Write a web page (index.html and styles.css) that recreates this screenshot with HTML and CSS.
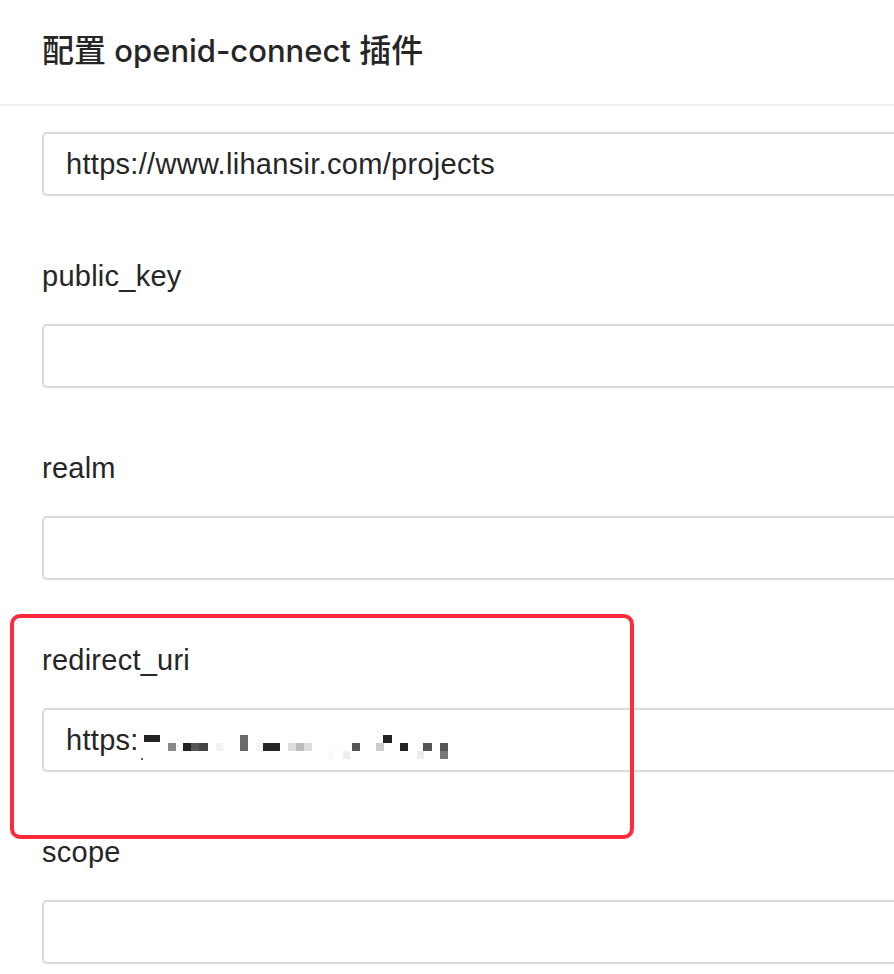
FILE: index.html
```html
<!DOCTYPE html>
<html lang="zh-CN">
<head>
<meta charset="utf-8">
<title>配置 openid-connect 插件</title>
<link rel="stylesheet" href="styles.css">
</head>
<body>
<div class="drawer">
  <header class="drawer-header">
    <h1 class="title"><span class="cjk">配置</span> openid-connect <span class="cjk">插件</span></h1>
  </header>
  <div class="drawer-body">
    <div class="form">
      <div class="form-item">
        <div class="input">https://www.lihansir.com/projects</div>
      </div>
      <div class="form-item">
        <div class="label">public_key</div>
        <div class="input"></div>
      </div>
      <div class="form-item">
        <div class="label">realm</div>
        <div class="input"></div>
      </div>
      <div class="form-item">
        <div class="label">redirect_uri</div>
        <div class="input">https:<svg class="mosaic" width="312" height="32" viewBox="0 0 312 32" aria-hidden="true">
          <rect x="1" y="27" width="2" height="2" fill="#666"/>
          <rect x="4" y="4" width="16" height="7" fill="#222"/>
          <rect x="28" y="12" width="8" height="8" fill="#888"/>
          <rect x="43" y="12" width="8" height="8" fill="#222"/>
          <rect x="51" y="12" width="8" height="8" fill="#555"/>
          <rect x="59" y="12" width="9" height="8" fill="#444"/>
          <rect x="76" y="12" width="7" height="8" fill="#f3f3f3"/>
          <rect x="100" y="4" width="8" height="16" fill="#6a6a6a"/>
          <rect x="116" y="12" width="7" height="8" fill="#f5f5f5"/>
          <rect x="123" y="12" width="17" height="8" fill="#262626"/>
          <rect x="148" y="12" width="8" height="8" fill="#ddd"/>
          <rect x="156" y="12" width="8" height="8" fill="#bbb"/>
          <rect x="164" y="12" width="8" height="8" fill="#ddd"/>
          <rect x="188" y="20" width="7" height="8" fill="#fafafa"/>
          <rect x="203" y="20" width="7" height="8" fill="#eee"/>
          <rect x="212" y="12" width="8" height="8" fill="#555"/>
          <rect x="236" y="12" width="8" height="8" fill="#ccc"/>
          <rect x="243" y="4" width="9" height="8" fill="#222"/>
          <rect x="260" y="12" width="8" height="8" fill="#222"/>
          <rect x="277" y="20" width="7" height="8" fill="#eee"/>
          <rect x="283" y="12" width="9" height="8" fill="#555"/>
          <rect x="300" y="12" width="8" height="8" fill="#555"/>
          <rect x="300" y="20" width="8" height="8" fill="#777"/>
        </svg></div>
      </div>
      <div class="form-item">
        <div class="label">scope</div>
        <div class="input"></div>
      </div>
    </div>
    <div class="highlight"></div>
  </div>
</div>
</body>
</html>
```

FILE: styles.css
```css
html, body {
  margin: 0;
  padding: 0;
  background: #ffffff;
}

body {
  width: 894px;
  height: 974px;
  overflow: hidden;
  font-family: "Liberation Sans", "Noto Sans CJK SC", sans-serif;
  color: #262626;
}

.drawer {
  position: relative;
  width: 894px;
  height: 974px;
  overflow: hidden;
}

.drawer-header {
  height: 104px;
  box-sizing: content-box;
  border-bottom: 2px solid #f0f0f0;
  padding: 0 42px;
  display: flex;
  align-items: center;
}

.title {
  margin: 0;
  padding-bottom: 6px;
  font-family: "Inter", "Noto Sans CJK SC", sans-serif;
  font-size: 31px;
  font-weight: 500;
  line-height: 44px;
  color: #262626;
}

.title .cjk {
  font-family: "Noto Sans CJK SC", sans-serif;
  font-size: 32px;
  font-weight: 500;
}

.drawer-body {
  padding: 26px 0 0 42px;
}

.form {
  width: 960px;
  display: flex;
  flex-direction: column;
  gap: 58px;
}

.form-item {
  display: flex;
  flex-direction: column;
  gap: 26px;
}

.label {
  font-size: 29px;
  letter-spacing: 0.25px;
  line-height: 44px;
  height: 44px;
}

.input {
  box-sizing: border-box;
  height: 64px;
  border: 2px solid #d9d9d9;
  border-radius: 5px;
  padding: 0 22px;
  font-size: 29px;
  letter-spacing: 0.3px;
  line-height: 58px;
  white-space: nowrap;
  display: flex;
  align-items: center;
}

.mosaic {
  display: block;
  margin-top: 14px;
  margin-left: 1px;
}

.highlight {
  position: absolute;
  left: 10px;
  top: 614px;
  width: 624px;
  height: 225px;
  box-sizing: border-box;
  border: 4px solid #ff2b3b;
  border-radius: 10px;
}
```
